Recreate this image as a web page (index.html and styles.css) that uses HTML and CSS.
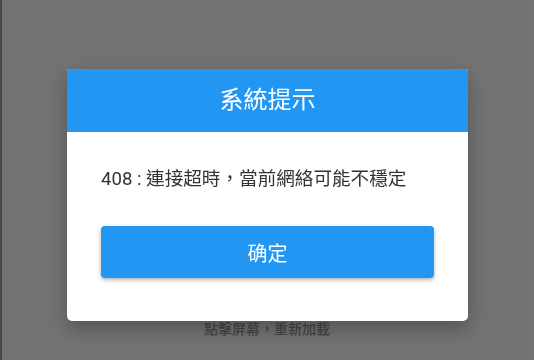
FILE: index.html
```html
<!DOCTYPE html>
<html>
<head>
<meta charset="utf-8">
<link rel="stylesheet" href="styles.css">
</head>
<body>
<div class="page">
  <div class="reload">點擊屏幕，重新加載</div>
</div>
<div class="overlay">
  <div class="dialog">
    <div class="dialog-header">系統提示</div>
    <div class="dialog-body">
      <p class="message">408 : 連接超時，當前網絡可能不穩定</p>
      <button class="ok">确定</button>
    </div>
  </div>
</div>
</body>
</html>
```
FILE: styles.css
```css
html, body {
  margin: 0;
  padding: 0;
}
body {
  width: 534px;
  height: 360px;
  overflow: hidden;
  background: #737373;
  font-family: Roboto, "Noto Sans CJK TC", sans-serif;
}
.page {
  height: 360px;
  box-sizing: border-box;
  border-left: 2px solid #474747;
  display: flex;
  flex-direction: column;
  align-items: center;
  padding-top: 319px;
}
.reload {
  font-size: 14px;
  line-height: 20px;
  color: #454545;
  font-weight: 500;
  margin-left: -2px;
}
.overlay {
  position: fixed;
  left: 0;
  top: 0;
  width: 534px;
  height: 360px;
  display: flex;
  justify-content: center;
  align-items: flex-start;
  padding-top: 69px;
  box-sizing: border-box;
}
.dialog {
  width: 401px;
  background: #fff;
  border-radius: 2px 2px 5px 5px;
  overflow: hidden;
  box-shadow: 0 8px 20px rgba(0, 0, 0, 0.28);
  margin-left: 1px;
}
.dialog-header {
  height: 63px;
  background: #2196f3;
  color: #fff;
  font-size: 24px;
  line-height: 63px;
  text-align: center;
}
.dialog-body {
  padding: 35px 34px 43px 34px;
  display: flex;
  flex-direction: column;
}
.message {
  margin: 0;
  font-size: 18.6px;
  line-height: 24px;
  color: #333;
  white-space: nowrap;
}
.ok {
  margin-top: 35px;
  height: 52px;
  border: none;
  border-radius: 4px;
  background: #2196f3;
  color: #fff;
  font-family: Roboto, "Noto Sans CJK TC", sans-serif;
  font-size: 20px;
  box-shadow: 0 2px 4px rgba(0, 0, 0, 0.3);
  padding: 0;
}
```
